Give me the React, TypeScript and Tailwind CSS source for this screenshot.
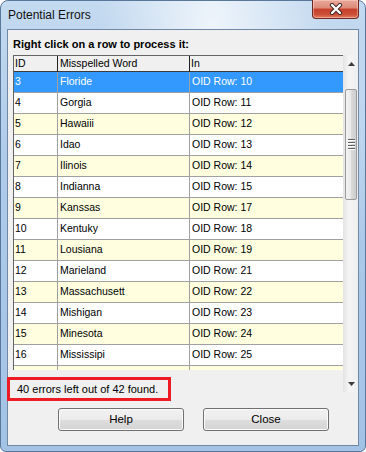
const font = "font-['Liberation_Sans',Arial,sans-serif]"

const rows: [number, string, number][] = [
  [3, 'Floride', 10],
  [4, 'Gorgia', 11],
  [5, 'Hawaiii', 12],
  [6, 'Idao', 13],
  [7, 'Ilinois', 14],
  [8, 'Indianna', 15],
  [9, 'Kanssas', 17],
  [10, 'Kentuky', 18],
  [11, 'Lousiana', 19],
  [12, 'Marieland', 21],
  [13, 'Massachusett', 22],
  [14, 'Mishigan', 23],
  [15, 'Minesota', 24],
  [16, 'Mississipi', 25],
]

function Row({ id, word, oid }: { id: number; word: string; oid: number }) {
  const selected = id === 3
  const bg = selected ? 'bg-[#3399ff] text-white' : id % 2 === 1 ? 'bg-[#ffffe0] text-black' : 'bg-white text-black'
  return (
    <div className={`grid grid-cols-[44px_132px_1fr] h-[21px] shrink-0 border-b border-[#a0a0a0] text-[10.5px] ${bg}`}>
      <div className="flex items-center pl-[1px] border-r border-[#a0a0a0]">{id}</div>
      <div className="flex items-center pl-[2px] border-r border-[#a0a0a0]">{word}</div>
      <div className="flex items-center pl-[2px]">OID Row: {oid}</div>
    </div>
  )
}

// next row, only a sliver of it shows above the status panel
function PartialRow() {
  return (
    <div className="grid grid-cols-[44px_132px_1fr] h-[21px] shrink-0 bg-[#ffffe0]">
      <div className="border-r border-[#a0a0a0]" />
      <div className="border-r border-[#a0a0a0]" />
      <div />
    </div>
  )
}

function Arrow({ down }: { down?: boolean }) {
  return (
    <div className="h-[17px] flex items-center justify-center">
      <svg width="7" height="4" viewBox="0 0 7 4">
        <path d={down ? 'M0 0 L7 0 L3.5 4Z' : 'M0 4 L3.5 0 L7 4Z'} fill="#3c3c3c" />
      </svg>
    </div>
  )
}

function ScrollBar() {
  return (
    <div className="w-[15px] h-[337px] flex flex-col bg-[linear-gradient(90deg,#e6e6e6,#f4f4f4_35%,#efefef)] border-l border-[#e4e4e4]">
      <Arrow />
      <div className="h-[17px]" />
      {/* thumb */}
      <div className="h-[111px] mx-[1px] rounded-[2px] border border-[#9a9a9a] bg-[linear-gradient(90deg,#f3f3f3,#e9e9e9_45%,#d9d9d9_55%,#cdcdcd)] flex flex-col items-center justify-center gap-[1px]">
        {[0, 1, 2, 3].map(i => (
          <div key={i} className="w-[7px] h-[2px] border-t border-[#606060] border-b border-b-white" />
        ))}
      </div>
      <div className="flex-1" />
      <Arrow down />
    </div>
  )
}

function WinButton({ label }: { label: string }) {
  return (
    <button
      type="button"
      className="w-[126px] h-[23px] rounded-[3px] border border-[#707070] bg-[linear-gradient(#f2f2f2_0%,#ebebeb_50%,#dddddd_51%,#d4d4d4_100%)] shadow-[inset_0_0_0_1px_#fbfbfb] text-[11.5px] text-black flex items-center justify-center"
    >
      {label}
    </button>
  )
}

export default function App() {
  return (
    <div className={`w-[366px] h-[452px] overflow-hidden bg-white ${font}`}>
      <div className="w-[366px] h-[452px] flex flex-col px-[6px] pb-[5px] rounded-t-[8px] rounded-b-[6px] border border-[#58779a] bg-[radial-gradient(ellipse_at_58%_8%,rgba(255,255,255,0.75),transparent_38%),radial-gradient(ellipse_at_80%_30%,rgba(255,255,255,0.35),transparent_30%),linear-gradient(180deg,#c4daf0_0%,#aecbea_35%,#a3c3e6_100%)]">
        {/* Title bar */}
        <div className="h-[28px] shrink-0 flex items-start justify-between">
          <span className="pl-[1px] pt-[6px] leading-[16px] text-[12px] text-[#111]">Potential Errors</span>
          <button
            type="button"
            className="-mt-[1px] w-[47px] h-[19px] rounded-b-[4px] border border-t-0 border-[#6e2a22] bg-[linear-gradient(#eaa99b_0%,#dc8a78_45%,#c63f2b_50%,#cc4f38_80%,#e2805f_100%)] shadow-[inset_0_0_0_1px_rgba(255,220,210,0.45)] flex items-center justify-center"
          >
            <svg width="14" height="12" viewBox="0 0 14 12">
              <path d="M3 2 L11 10 M11 2 L3 10" stroke="#3b2420" strokeWidth="4.2" strokeLinecap="round" />
              <path d="M3 2 L11 10 M11 2 L3 10" stroke="#ffffff" strokeWidth="2.4" strokeLinecap="round" />
            </svg>
          </button>
        </div>

        {/* Client area */}
        <div className="h-[417px] shrink-0 flex flex-col border border-[#7088a3] bg-[#f0f0f0]">
          <p className="mt-[8px] pl-[5px] h-[13px] leading-[13px] text-[11px] font-bold text-black">
            Right click on a row to process it:
          </p>

          <div className="mt-[4px] pl-[5px] flex">
            <div className="w-[330px] flex flex-col">
              {/* Grid */}
              <div className="h-[315px] flex flex-col overflow-hidden border-l border-t border-[#646464]">
                <div className="grid grid-cols-[44px_132px_1fr] h-[16px] shrink-0 border-b border-[#3c3c3c] bg-[#f0f0f0] text-[10.5px] text-black">
                  <div className="flex items-center pl-[1px] border-r border-[#202020]">ID</div>
                  <div className="flex items-center pl-[2px] border-r border-[#202020]">Misspelled Word</div>
                  <div className="flex items-center pl-[1px]">In</div>
                </div>
                {rows.map(([id, word, oid]) => (
                  <Row key={id} id={id} word={word} oid={oid} />
                ))}
                <PartialRow />
              </div>

              {/* Status */}
              <div className="-ml-[6px] mt-[7px] w-[164px] h-[24px] border-[3px] border-[#ed1c24] flex items-center pl-[7px] text-[11px] text-black">
                40 errors left out of 42 found.
              </div>
            </div>
            <ScrollBar />
          </div>

          <div className="mt-[7px] pl-[50px] flex gap-[19px]">
            <WinButton label="Help" />
            <WinButton label="Close" />
          </div>
        </div>
      </div>
    </div>
  )
}
